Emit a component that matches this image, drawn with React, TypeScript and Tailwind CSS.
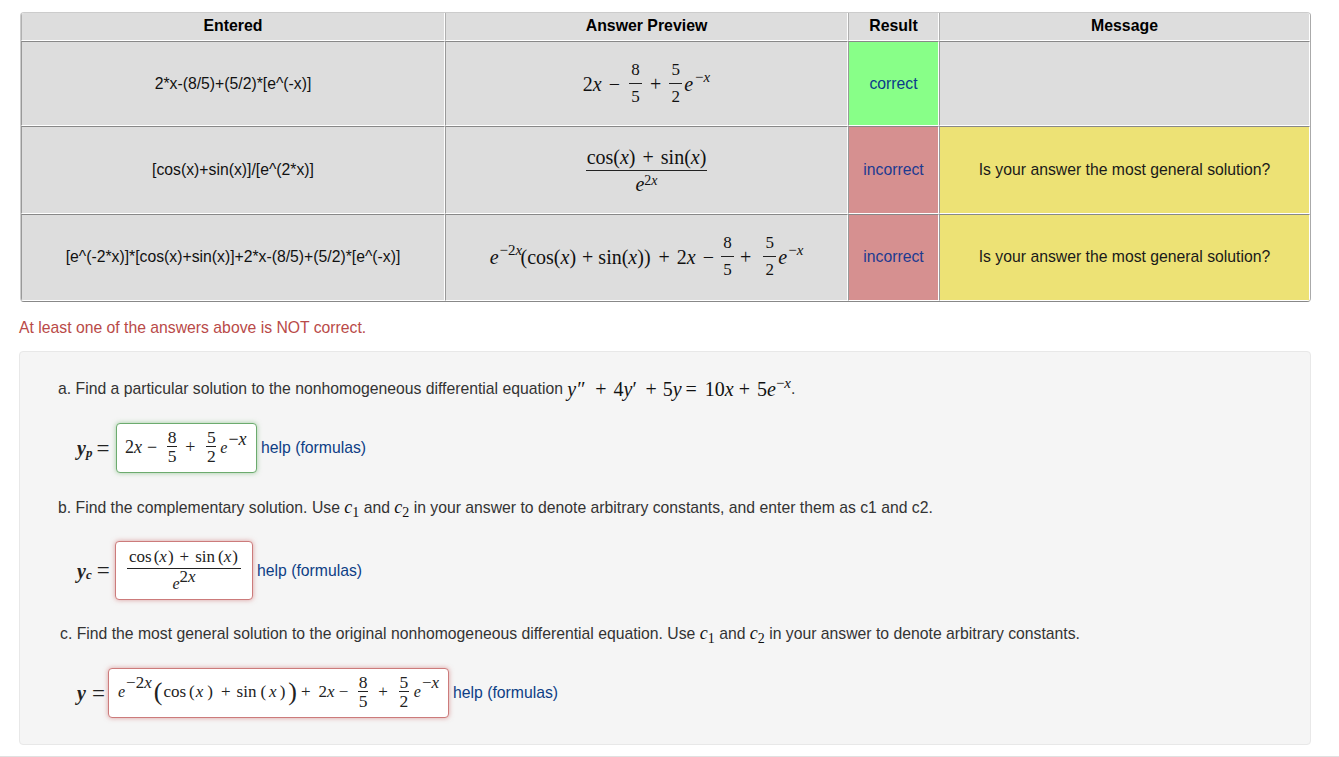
import React from "react";

const sans = "font-['Liberation_Sans',Arial,sans-serif]";
const serif = "font-['Liberation_Serif','Times_New_Roman',serif]";

function Frac({ top, bottom, cls }: { top: React.ReactNode; bottom: React.ReactNode; cls: string }) {
  return (
    <span className={`inline-flex flex-col items-center leading-none ${cls}`}>
      <span className="leading-[18px]">{top}</span>
      <span className="h-px w-full bg-[#222]" />
      <span className="leading-[18px]">{bottom}</span>
    </span>
  );
}

function PF({ top, bottom, cls }: { top: string; bottom: string; cls: string }) {
  return <Frac top={top} bottom={bottom} cls={`w-[13px] gap-[4px] text-[17px] ${cls}`} />;
}

function BF({ top, bottom, cls }: { top: string; bottom: string; cls: string }) {
  return <Frac top={top} bottom={bottom} cls={`w-[10px] gap-0 text-[17.5px] mb-[1px] ${cls}`} />;
}

function S({ cls = "", children }: { cls?: string; children: React.ReactNode }) {
  return <span className={`inline-block ${cls}`}>{children}</span>;
}

function I({ cls = "", children }: { cls?: string; children: React.ReactNode }) {
  return <i className={`inline-block italic ${cls}`}>{children}</i>;
}

const pv = `inline-flex items-center text-[20px] text-[#111] whitespace-nowrap ${serif}`;
const psup = "text-[15px] -translate-y-[6px]";

function PreviewA() {
  return (
    <span className={pv}>
      <span>2<I>x</I></span>
      <S cls="ml-[7px] mr-[9px]">−</S>
      <PF top="8" bottom="5" cls="" />
      <S cls="mx-[8px]">+</S>
      <PF top="5" bottom="2" cls="" />
      <I cls="ml-[2px]">e</I>
      <S cls={`${psup} ml-[2px]`}>−<I>x</I></S>
    </span>
  );
}

function PreviewB() {
  return (
    <span className={`inline-flex flex-col items-center w-[121px] pt-[4px] text-[20px] text-[#111] whitespace-nowrap ${serif}`}>
      <span className="leading-[26px]">cos(<I>x</I>)<S cls="mx-[7px]">+</S>sin(<I>x</I>)</span>
      <span className="h-px w-full bg-[#222]" />
      <span className="leading-[26px]"><I>e</I><S cls="text-[14px] -translate-y-[6px]">2<I>x</I></S></span>
    </span>
  );
}

function PreviewC() {
  return (
    <span className={pv}>
      <I>e</I>
      <S cls={`${psup} ml-[1px] w-[21px]`}>−2<I>x</I></S>
      <span>(cos(<I>x</I>)</span>
      <S cls="ml-[6px] mr-[5px]">+</S>
      <span>sin(<I>x</I>))</span>
      <S cls="ml-[8px] mr-[7px]">+</S>
      <span>2<I>x</I></span>
      <S cls="ml-[7px] mr-[7px]">−</S>
      <PF top="8" bottom="5" cls="" />
      <S cls="ml-[6px] mr-[12px]">+</S>
      <PF top="5" bottom="2" cls="" />
      <I cls="ml-[2px]">e</I>
      <S cls={`${psup} ml-[1px]`}>−<I>x</I></S>
    </span>
  );
}

const th = "p-0 pb-[2px] text-center align-middle font-bold text-[15.85px] text-black bg-[#ddd] border-b border-b-white border-l border-l-[#b0b0b0] border-r border-r-white";
const tdBase = "p-0 text-center align-middle text-[15.75px] border-t border-t-[#888] border-b border-b-white border-l border-l-[#999] border-r border-r-white";

function Row({ h, entered, preview, result, msg, last, pad = "" }: { h: string; entered: string; preview: React.ReactNode; result: string; msg?: string; last?: boolean; pad?: string }) {
  const ok = result === "correct";
  return (
    <tr className={h}>
      <td className={`${tdBase} ${pad} bg-[#ddd] text-[#111]`}>{entered}</td>
      <td className={`${tdBase} ${last ? pad : ""} bg-[#ddd]`}>{preview}</td>
      <td className={`${tdBase} ${pad} ${ok ? "bg-[#8f8] text-[#0a3a8a]" : "bg-[#d69090] text-[#1c3a90]"}`}>{result}</td>
      <td className={`${tdBase} ${pad} ${msg ? "bg-[#ede275]" : "bg-[#ddd]"} text-[#1a1a1a]`}>{msg}</td>
    </tr>
  );
}

function Help() {
  return <span className="ml-[4px] text-[15.75px] text-[#0e3e85] whitespace-nowrap">help (formulas)</span>;
}

function Box({ w, h, ok, cls, children }: { w: string; h: string; ok?: boolean; cls: string; children: React.ReactNode }) {
  return (
    <span
      className={`inline-flex items-center ${cls} ${w} ${h} shrink-0 bg-white rounded-[4px] border ${
        ok
          ? "border-[#6cab6e] shadow-[0_0_5px_rgba(90,170,90,0.55)]"
          : "border-[#cc7b7b] shadow-[0_0_5px_rgba(200,90,90,0.55)]"
      } ${serif} text-[#222] whitespace-nowrap`}
    >
      {children}
    </span>
  );
}

function C({ n }: { n: string }) {
  return (
    <span className={`text-[18px] leading-none text-[#111] ${serif}`}>
      <i className="italic">c</i><sub className="text-[14px]">{n}</sub>
    </span>
  );
}

function Label({ w, sub, gap }: { w: string; sub?: string; gap: string }) {
  return (
    <span className={`ml-[19px] ${w} flex items-center text-[#222] whitespace-nowrap ${serif}`}>
      <b className="italic text-[20px] leading-none">y</b>
      {sub && <b className="italic text-[13px] leading-none translate-y-[4px]">{sub}</b>}
      <span className={`${gap} text-[23px] leading-none`}>=</span>
    </span>
  );
}

export default function App() {
  return (
    <div className={`h-[757px] bg-white overflow-hidden flex flex-col ${sans}`}>
      <div className="mx-[20px] mt-[12px] w-[1291px] h-[290px] border border-[#ccc] border-b-[#888] border-r-[#aaa] rounded-[4px] overflow-hidden">
        <table className="w-full h-full table-fixed border-separate border-spacing-0">
          <colgroup>
            <col className="w-[424px]" />
            <col className="w-[403px]" />
            <col className="w-[91px]" />
            <col />
          </colgroup>
          <thead>
            <tr className="h-[28px]">
              <th className={th}>Entered</th>
              <th className={th}>Answer Preview</th>
              <th className={th}>Result</th>
              <th className={th}>Message</th>
            </tr>
          </thead>
          <tbody>
            <Row h="h-[85px]" entered="2*x-(8/5)+(5/2)*[e^(-x)]" preview={<PreviewA />} result="correct" />
            <Row h="h-[88px]" pad="pb-[1px]" entered="[cos(x)+sin(x)]/[e^(2*x)]" preview={<PreviewB />} result="incorrect" msg="Is your answer the most general solution?" />
            <Row h="h-[87px]" pad="pb-[2px]" last entered="[e^(-2*x)]*[cos(x)+sin(x)]+2*x-(8/5)+(5/2)*[e^(-x)]" preview={<PreviewC />} result="incorrect" msg="Is your answer the most general solution?" />
          </tbody>
        </table>
      </div>

      <p className="ml-[19px] mt-[14px] leading-[24px] text-[15.75px] text-[#b94a48]">At least one of the answers above is NOT correct.</p>

      <div className="ml-[19px] mt-[11px] w-[1292px] h-[394px] bg-[#f5f5f5] border border-[#e8e8e8] rounded-[4px] pl-[38px] pt-[25px] text-[15.75px] text-[#333] flex flex-col">
        <p className="h-[24px] flex items-center whitespace-pre">
          <span>a. Find a particular solution to the nonhomogeneous differential equation </span>
          <span className={`inline-flex items-center text-[20px] text-[#111] ${serif}`}>
            <I>y</I><S cls="w-[11px] ml-[1px]">″</S>
            <S cls="ml-[7px] mr-[7px]">+</S>
            4<I>y</I><S cls="w-[7px]">′</S>
            <S cls="ml-[6px] mr-[6px]">+</S>
            5<I>y</I>
            <S cls="ml-[4px] mr-[8px]">=</S>
            10<I>x</I>
            <S cls="ml-[5px] mr-[7px]">+</S>
            5<I>e</I>
            <S cls="text-[15px] -translate-y-[6px]">−<I>x</I></S>
          </span>
          <span>.</span>
        </p>

        <div className="mt-[22px] h-[50px] flex items-center">
          <Label w="w-[39px]" sub="p" gap="ml-[4px]" />
          <Box w="w-[141px]" h="h-[50px]" ok cls="justify-start pl-[8px]">
            <span className="inline-flex items-center text-[18px] -translate-y-[1px]">
              2<I>x</I>
              <S cls="ml-[5px] mr-[10px]">−</S>
              <BF top="8" bottom="5" cls="" />
              <S cls="ml-[8px] mr-[11px]">+</S>
              <BF top="5" bottom="2" cls="" />
              <I cls="ml-[4px] translate-y-[1px] text-[16px]">e</I>
              <S cls="-translate-y-[8px] ml-[1px]">−<I>x</I></S>
            </span>
          </Box>
          <Help />
        </div>

        <p className="mt-[23px] leading-[24px] whitespace-pre">
          b. Find the complementary solution. Use <C n="1" /> and <C n="2" /> in your answer to denote arbitrary constants, and enter them as c1 and c2.
        </p>

        <div className="mt-[21px] h-[59px] flex items-center">
          <Label w="w-[38px]" sub="c" gap="ml-[5px]" />
          <Box w="w-[138px]" h="h-[59px]" cls="justify-center">
            <span className="inline-flex flex-col w-[114px] pb-[2px] text-[17px]">
              <span className="flex items-center h-[22px] pl-[2px]">
                cos<S cls="ml-[2px]">(</S><I>x</I><S cls="ml-[1px]">)</S>
                <S cls="ml-[6px]">+</S>
                <S cls="ml-[6px]">sin</S><S cls="ml-[3px]">(</S><I>x</I><S cls="ml-[1px]">)</S>
              </span>
              <span className="h-px w-full bg-[#222]" />
              <span className="flex items-center justify-center h-[24px]">
                <I cls="text-[16px] translate-y-[3px]">e</I>
                <S cls="text-[17px] -translate-y-[4px]">2<I>x</I></S>
              </span>
            </span>
          </Box>
          <Help />
        </div>

        <p className="mt-[22px] ml-[2px] leading-[24px] whitespace-pre">
          c. Find the most general solution to the original nonhomogeneous differential equation. Use <C n="1" /> and <C n="2" /> in your answer to denote arbitrary constants.
        </p>

        <div className="mt-[22px] h-[50px] flex items-center">
          <Label w="w-[31px]" gap="ml-[6px]" />
          <Box w="w-[341px]" h="h-[50px]" cls="justify-start pl-[9px]">
            <span className="inline-flex items-center text-[17px] -translate-y-[1px]">
              <I cls="text-[16px]">e</I>
              <S cls="ml-[1px] -translate-y-[9px]">−2<I>x</I></S>
              <S cls="ml-[2px] text-[26px] font-light leading-none">(</S>
              <S cls="ml-[1px]">cos</S>
              <S cls="ml-[3px]">(</S><I cls="ml-[1px]">x</I><S cls="ml-[4px]">)</S>
              <S cls="ml-[8px]">+</S>
              <S cls="ml-[6px]">sin</S>
              <S cls="ml-[4px]">(</S><I cls="ml-[3px]">x</I><S cls="ml-[3px]">)</S>
              <S cls="ml-[3px] text-[26px] font-light leading-none">)</S>
              <S cls="ml-[4px]">+</S>
              <S cls="ml-[8px]">2<I>x</I></S>
              <S cls="ml-[4px]">−</S>
              <BF top="8" bottom="5" cls="ml-[10px]" />
              <S cls="ml-[10px]">+</S>
              <BF top="5" bottom="2" cls="ml-[11px]" />
              <I cls="ml-[5px] text-[16px]">e</I>
              <S cls="ml-[1px] -translate-y-[9px]">−<I>x</I></S>
            </span>
          </Box>
          <Help />
        </div>
      </div>

      <div className="mt-[11px] h-px bg-[#e0e0e0]" />
    </div>
  );
}
